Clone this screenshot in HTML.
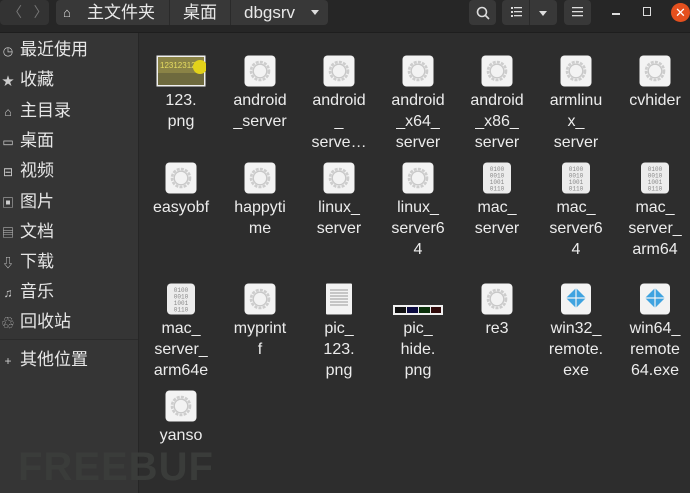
<!DOCTYPE html>
<html><head><meta charset="utf-8"><style>
*{margin:0;padding:0;box-sizing:border-box}
body{width:690px;height:493px;overflow:hidden;background:#2d2d2d;font-family:"Liberation Sans","Noto Sans CJK SC",sans-serif;color:#e8e8e8;position:relative}
.top{position:absolute;left:0;top:0;width:690px;height:33px;background:#262626;border-bottom:1px solid #1e1e1e}
.btn{position:absolute;top:0;height:25px;background:#383838;border-radius:4px}
.lbl{position:absolute;top:0;height:25px;line-height:25px;font-size:17px;color:#e8e8e8}
.side{position:absolute;left:0;top:33px;width:139px;height:460px;background:#353535;border-right:1px solid #262626}
.si{position:absolute;left:0;font-size:17px;line-height:20px;color:#e6e6e6;white-space:nowrap}
.si i{display:inline-block;width:16px;font-style:normal;font-size:12px;color:#ccc;text-align:center;margin-right:4px}
.it{position:absolute;width:80px;text-align:center;font-size:16px;line-height:21px;color:#ececec}
.it svg{display:block;margin:0 auto 3px}
.t{display:block}
</style></head><body>
<div class="top">
 <div class="btn" style="left:0;width:49px;background:#333"></div>
 <div class="lbl" style="left:8px;font-size:14px;color:#777">〈 &nbsp; 〉</div>
 <div class="btn" style="left:56px;width:272px"></div>
 <div style="position:absolute;left:169px;top:0;width:1px;height:25px;background:#2a2a2a"></div>
 <div style="position:absolute;left:230px;top:0;width:1px;height:25px;background:#2a2a2a"></div>
 <div class="lbl" style="left:63px;font-size:13px;color:#ddd">⌂</div>
 <div class="lbl" style="left:87px">主文件夹</div>
 <div class="lbl" style="left:183px">桌面</div>
 <div class="lbl" style="left:244px">dbgsrv</div>
 <div style="position:absolute;left:311px;top:10px;border:4px solid transparent;border-top:5px solid #ddd"></div>
 <div class="btn" style="left:469px;width:27px"></div>
 <svg style="position:absolute;left:476px;top:6px" width="14" height="14"><circle cx="6" cy="6" r="4.5" fill="none" stroke="#ddd" stroke-width="1.6"/><line x1="9.5" y1="9.5" x2="13" y2="13" stroke="#ddd" stroke-width="1.6"/></svg>
 <div class="btn" style="left:502px;width:55px"></div>
 <div style="position:absolute;left:529px;top:0;width:1px;height:25px;background:#2a2a2a"></div>
 <svg style="position:absolute;left:511px;top:6px" width="12" height="12" fill="#ddd"><rect x="0" y="1" width="2" height="2"/><rect x="0" y="5" width="2" height="2"/><rect x="0" y="9" width="2" height="2"/><rect x="3" y="1" width="8" height="1.3"/><rect x="3" y="5" width="8" height="1.3"/><rect x="3" y="9" width="8" height="1.3"/></svg>
 <div style="position:absolute;left:539px;top:11px;border:4px solid transparent;border-top:5px solid #ddd"></div>
 <div class="btn" style="left:564px;width:27px"></div>
 <svg style="position:absolute;left:572px;top:7px" width="11" height="10" fill="#ddd"><rect y="0" width="11" height="1.3"/><rect y="4" width="11" height="1.3"/><rect y="8" width="11" height="1.3"/></svg>
 <div style="position:absolute;left:612px;top:13px;width:8px;height:1.5px;background:#ddd"></div>
 <div style="position:absolute;left:643px;top:7px;width:8px;height:9px;border:1.5px solid #ddd"></div>
 <div style="position:absolute;left:671px;top:3px;width:19px;height:19px;border-radius:50%;background:#e5501e;color:#fff;font-size:13px;line-height:19px;text-align:center">✕</div>
</div>
<div class="side">
 <div class="si" style="top:7px"><i>◷</i>最近使用</div>
 <div class="si" style="top:37px"><i>★</i>收藏</div>
 <div class="si" style="top:68px"><i>⌂</i>主目录</div>
 <div class="si" style="top:98px"><i>▭</i>桌面</div>
 <div class="si" style="top:128px"><i>⊟</i>视频</div>
 <div class="si" style="top:159px"><i>▣</i>图片</div>
 <div class="si" style="top:189px"><i>▤</i>文档</div>
 <div class="si" style="top:219px"><i>⇩</i>下载</div>
 <div class="si" style="top:249px"><i>♫</i>音乐</div>
 <div class="si" style="top:279px"><i>♲</i>回收站</div>
 <div style="position:absolute;left:0;top:306px;width:138px;height:1px;background:#2b2b2b"></div>
 <div class="si" style="top:317px"><i>+</i>其他位置</div>
 <div style="position:absolute;left:18px;top:410px;font-size:40px;line-height:48px;font-weight:bold;color:#3a3c3a;letter-spacing:1px">FREEBUF</div>
</div>

<svg width="0" height="0" style="position:absolute"><defs>
<symbol id="g" viewBox="0 0 32 32"><rect x="0.5" y="0.5" width="31" height="31" rx="4" fill="#f3f3f3"/><circle cx="16" cy="16" r="9" fill="none" stroke="#cdcdcd" stroke-width="2.6" stroke-dasharray="3 1.2"/><circle cx="16" cy="16" r="6.8" fill="#f3f3f3" stroke="#c8c8c8" stroke-width="1.4"/></symbol>
<symbol id="b" viewBox="0 0 32 32"><rect x="2" y="0.5" width="28" height="31" rx="4" fill="#ececec"/><text x="16" y="9" font-size="6" font-family="Liberation Mono" fill="#888" text-anchor="middle">0100</text><text x="16" y="15.5" font-size="6" font-family="Liberation Mono" fill="#888" text-anchor="middle">0010</text><text x="16" y="22" font-size="6" font-family="Liberation Mono" fill="#888" text-anchor="middle">1001</text><text x="16" y="28.5" font-size="6" font-family="Liberation Mono" fill="#888" text-anchor="middle">0110</text></symbol>
<symbol id="w" viewBox="0 0 32 32"><rect x="1" y="0.5" width="30" height="31" rx="4" fill="#f3f3f3"/><path d="M16 5 L26 15 L16 25 L6 15Z" fill="#3fa3e0"/><path d="M16 5 L16 25 M6 15 L26 15" stroke="#f3f3f3" stroke-width="1.2"/></symbol>
</defs></svg>

<div class="it" style="left:141px;top:55px"><svg width="50" height="32"><rect x="0.5" y="0.5" width="49" height="31" fill="#f0f0f0"/><rect x="2" y="2" width="46" height="28" fill="#8a8346"/><rect x="2" y="18" width="46" height="12" fill="#6e6a3e"/><text x="4" y="13" font-size="8" fill="#e6dc60" font-family="Liberation Sans">12312312</text><circle cx="44" cy="12" r="7" fill="#e3d21a"/></svg><span class="t">123.<br>png</span></div>
<div class="it" style="left:220px;top:55px"><svg width="32" height="32"><use href="#g"/></svg><span class="t">android<br>_server</span></div>
<div class="it" style="left:299px;top:55px"><svg width="32" height="32"><use href="#g"/></svg><span class="t">android<br>_<br>serve…</span></div>
<div class="it" style="left:378px;top:55px"><svg width="32" height="32"><use href="#g"/></svg><span class="t">android<br>_x64_<br>server</span></div>
<div class="it" style="left:457px;top:55px"><svg width="32" height="32"><use href="#g"/></svg><span class="t">android<br>_x86_<br>server</span></div>
<div class="it" style="left:536px;top:55px"><svg width="32" height="32"><use href="#g"/></svg><span class="t">armlinu<br>x_<br>server</span></div>
<div class="it" style="left:615px;top:55px"><svg width="32" height="32"><use href="#g"/></svg><span class="t">cvhider</span></div>

<div class="it" style="left:141px;top:162px"><svg width="32" height="32"><use href="#g"/></svg><span class="t">easyobf</span></div>
<div class="it" style="left:220px;top:162px"><svg width="32" height="32"><use href="#g"/></svg><span class="t">happyti<br>me</span></div>
<div class="it" style="left:299px;top:162px"><svg width="32" height="32"><use href="#g"/></svg><span class="t">linux_<br>server</span></div>
<div class="it" style="left:378px;top:162px"><svg width="32" height="32"><use href="#g"/></svg><span class="t">linux_<br>server6<br>4</span></div>
<div class="it" style="left:457px;top:162px"><svg width="32" height="32"><use href="#b"/></svg><span class="t">mac_<br>server</span></div>
<div class="it" style="left:536px;top:162px"><svg width="32" height="32"><use href="#b"/></svg><span class="t">mac_<br>server6<br>4</span></div>
<div class="it" style="left:615px;top:162px"><svg width="32" height="32"><use href="#b"/></svg><span class="t">mac_<br>server_<br>arm64</span></div>

<div class="it" style="left:141px;top:283px"><svg width="32" height="32"><use href="#b"/></svg><span class="t">mac_<br>server_<br>arm64e</span></div>
<div class="it" style="left:220px;top:283px"><svg width="32" height="32"><use href="#g"/></svg><span class="t">myprint<br>f</span></div>
<div class="it" style="left:299px;top:283px"><svg width="32" height="32"><rect x="3" y="0.5" width="26" height="31" rx="1" fill="#f3f3f3"/><g stroke="#999" stroke-width="1"><line x1="7" y1="7" x2="25" y2="7"/><line x1="7" y1="10" x2="25" y2="10"/><line x1="7" y1="13" x2="25" y2="13"/><line x1="7" y1="16" x2="25" y2="16"/><line x1="7" y1="19" x2="25" y2="19"/><line x1="7" y1="22" x2="25" y2="22"/></g></svg><span class="t">pic_<br>123.<br>png</span></div>
<div class="it" style="left:378px;top:283px"><svg width="52" height="32"><rect x="1" y="22" width="50" height="10" fill="#f0f0f0"/><rect x="3" y="24" width="11" height="6" fill="#111"/><rect x="15" y="24" width="11" height="6" fill="#0a0a40"/><rect x="27" y="24" width="11" height="6" fill="#0a300a"/><rect x="39" y="24" width="10" height="6" fill="#300a0a"/></svg><span class="t">pic_<br>hide.<br>png</span></div>
<div class="it" style="left:457px;top:283px"><svg width="32" height="32"><use href="#g"/></svg><span class="t">re3</span></div>
<div class="it" style="left:536px;top:283px"><svg width="32" height="32"><use href="#w"/></svg><span class="t">win32_<br>remote.<br>exe</span></div>
<div class="it" style="left:615px;top:283px"><svg width="32" height="32"><use href="#w"/></svg><span class="t">win64_<br>remote<br>64.exe</span></div>

<div class="it" style="left:141px;top:390px"><svg width="32" height="32"><use href="#g"/></svg><span class="t">yanso</span></div>
</body></html>
